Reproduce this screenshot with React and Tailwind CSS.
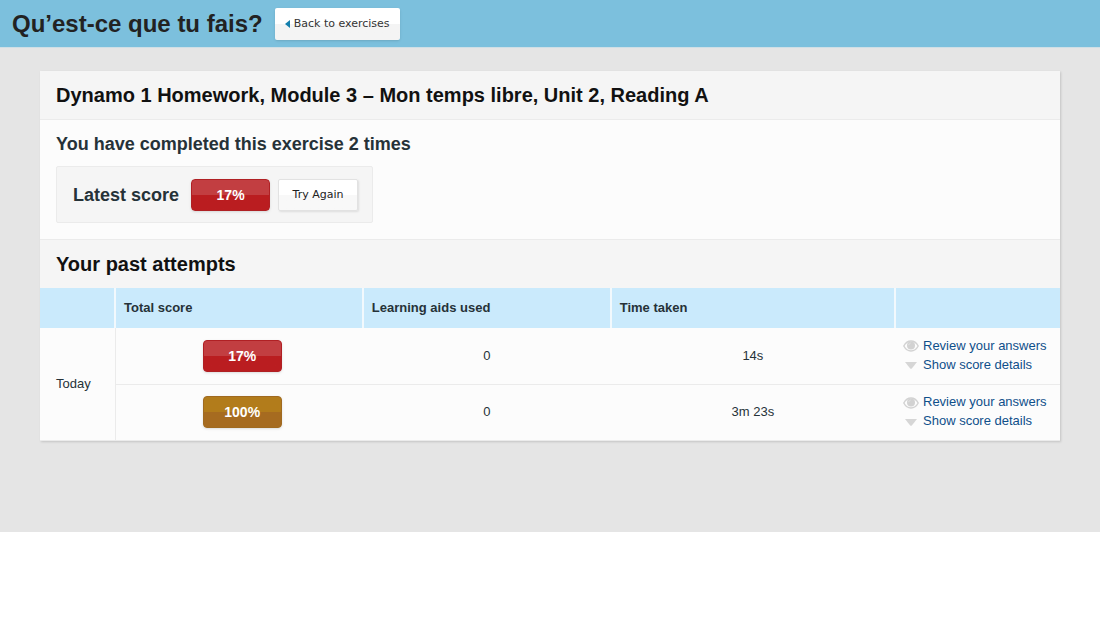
import clsx from "clsx";

const attempts = [
  { id: 1, score: 17, aids: 0, time: "14s" },
  { id: 2, score: 100, aids: 0, time: "3m 23s" },
];

function ScoreBadge({ score }) {
  return (
    <span
      className={clsx(
        "inline-flex h-8 w-[79px] items-center justify-center rounded border bg-linear-to-b from-50% to-50% text-sm font-bold text-white shadow-sm",
        score === 100
          ? "border-[#a06a20] from-[#b27c1b] to-[#a66b20]"
          : "border-[#b02024] from-[#c23e41] to-[#ba1d20]"
      )}
    >
      {score}%
    </span>
  );
}

function EyeIcon() {
  return (
    <svg viewBox="0 0 16 12" className="mt-[2px] h-3 w-4 shrink-0" aria-hidden="true">
      <path d="M.8 6C2.6 2.6 5 1 8 1S13.4 2.6 15.2 6C13.4 9.4 11 11 8 11S2.6 9.4.8 6Z" fill="none" stroke="#d2d2d2" strokeWidth="1.4" />
      <circle cx="8" cy="5.6" r="4" fill="#d2d2d2" />
      <path d="M5.6 4.8A2.6 2.6 0 0 1 7.2 3.2" fill="none" stroke="#ececec" strokeWidth=".6" strokeLinecap="round" />
    </svg>
  );
}

function ArrowIcon() {
  return (
    <svg viewBox="0 0 16 12" className="mt-[2px] h-3 w-4 shrink-0" aria-hidden="true">
      <path d="M2 3h12L9 9.3q-1 1-2 0Z" fill="#d6d6d6" />
    </svg>
  );
}

function HeaderCell({ children }) {
  return (
    <th scope="col" className="border-l-2 border-[#f2f9fd] px-2 text-left font-bold">
      {children}
    </th>
  );
}

function AttemptRow({ attempt, first }) {
  return (
    <tr className={clsx("h-14", !first && "border-t border-[#ebebeb]")}>
      {first && (
        <th scope="rowgroup" rowSpan={attempts.length} className="border-r border-[#ebebeb] pl-4 text-left font-normal">
          Today
        </th>
      )}
      <td className="pl-[6px] text-center">
        <ScoreBadge score={attempt.score} />
      </td>
      <td className="text-center">{attempt.aids}</td>
      <td className="text-center">{attempt.time}</td>
      <td className="pb-[2px] pl-2 text-[#0f4f8a]">
        <a href="#review" className="flex items-center gap-1 leading-[19px] whitespace-nowrap hover:underline">
          <EyeIcon />
          Review your answers
        </a>
        <a href="#details" className="flex items-center gap-1 leading-[19px] whitespace-nowrap hover:underline">
          <ArrowIcon />
          Show score details
        </a>
      </td>
    </tr>
  );
}

export default function App() {
  return (
    <div className="min-h-screen bg-white font-['Liberation_Sans',Arial,sans-serif] text-[#263238]">
      <div className="bg-[#e5e5e5] pb-[91px]">
        <header className="flex h-12 items-center gap-3 border-b border-[#cfdfe6] bg-[#7cc0dd] pl-3">
          <h1 className="text-2xl font-bold text-[#222]">Qu’est-ce que tu fais?</h1>
          <a
            href="#exercises"
            className="flex h-8 items-center gap-1 rounded-xs bg-linear-to-b from-white from-50% to-[#f4f4f4] to-50% px-[10px] font-['DejaVu_Sans',Verdana,sans-serif] text-[11px] text-[#333] shadow-sm"
          >
            <svg viewBox="0 0 5 8" className="h-2 w-[5px]" aria-hidden="true">
              <path d="M5 0v8L0 4Z" fill="#147fad" />
            </svg>
            <span className="pt-[2px]">Back to exercises</span>
          </a>
        </header>

        <main className="mx-10 mt-[23px] bg-[#fcfcfc] shadow-[1px_1px_2px_#c4c4c4]">
          <h2 className="border-b border-[#ebebeb] bg-[#f5f5f5] px-4 py-[10px] text-xl leading-7 font-bold text-[#111]">
            Dynamo 1 Homework, Module 3 – Mon temps libre, Unit 2, Reading A
          </h2>

          <section className="px-4 pt-3 pb-4">
            <h3 className="text-lg leading-6 font-bold">You have completed this exercise 2 times</h3>
            <div className="mt-[10px] inline-flex h-[57px] items-center rounded-xs border border-[#ebebeb] bg-[#f5f5f5] pr-[14px] pl-4 align-top">
              <span className="mr-3 text-lg font-bold">Latest score</span>
              <ScoreBadge score={17} />
              <button
                type="button"
                className="ml-2 h-8 w-20 rounded-xs border border-[#e2e2e2] bg-linear-to-b from-white from-50% to-[#f8f8f8] to-50% pt-[2px] font-['DejaVu_Sans',Verdana,sans-serif] text-[11px] text-[#222] shadow-[1px_1px_2px_#ddd]"
              >
                Try Again
              </button>
            </div>
          </section>

          <h2 className="border-t border-[#ebebeb] bg-[#f5f5f5] px-4 py-[10px] text-xl leading-7 font-bold text-[#111]">
            Your past attempts
          </h2>

          <table className="w-full table-fixed border-collapse border-b border-[#ebebeb] text-[13px]">
            <colgroup>
              <col className="w-[75px]" />
              <col className="w-[24.3%]" />
              <col className="w-[24.3%]" />
              <col />
              <col className="w-[165px]" />
            </colgroup>
            <thead>
              <tr className="h-10 bg-[#caeafc]">
                <td></td>
                <HeaderCell>Total score</HeaderCell>
                <HeaderCell>Learning aids used</HeaderCell>
                <HeaderCell>Time taken</HeaderCell>
                <HeaderCell />
              </tr>
            </thead>
            <tbody>
              {attempts.map((attempt, i) => (
                <AttemptRow key={attempt.id} attempt={attempt} first={i === 0} />
              ))}
            </tbody>
          </table>
        </main>
      </div>
    </div>
  );
}
